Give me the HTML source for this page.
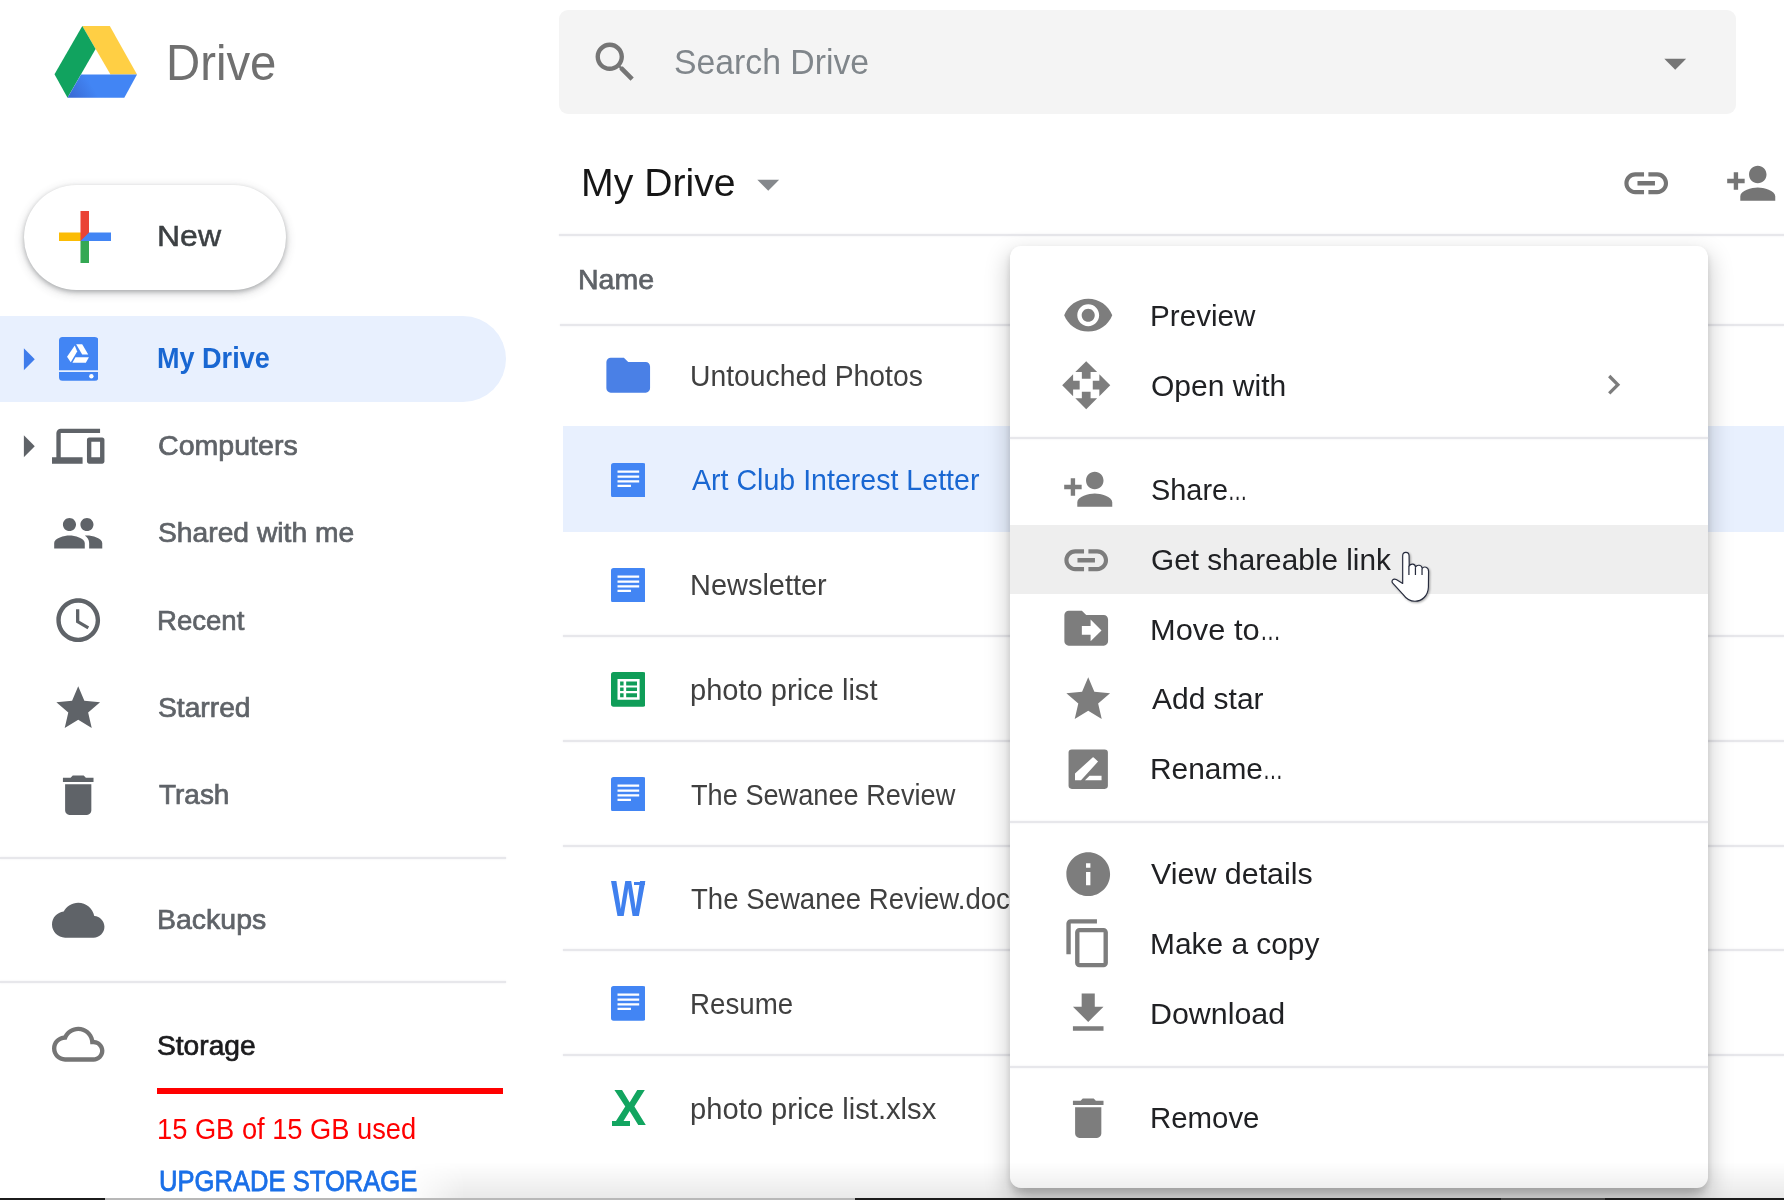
<!DOCTYPE html>
<html lang="en">
<head>
<meta charset="utf-8">
<title>My Drive - Google Drive</title>
<style>
html,body{margin:0;padding:0;background:#fff;}
body{width:1784px;height:1200px;position:relative;overflow:hidden;font-family:"Liberation Sans",sans-serif;}
.a{position:absolute;display:block;}
.t{position:absolute;white-space:nowrap;line-height:1;transform-origin:0 50%;}
.el{display:inline-block;transform:scaleX(.68);transform-origin:0 50%;margin-right:-.32em;}
.hl{position:absolute;background:#e7e7eb;height:2px;box-shadow:0 0 1.5px rgba(226,226,232,.9);}
</style>
</head>
<body>

<!-- ===== sidebar ===== -->
<svg class="a" style="left:50px;top:20px" width="92" height="84" viewBox="50 20 92 84">
  <polygon fill="#FFCF44" points="82.3,26 109.8,26 137,74.5 110.5,74.5"/>
  <polygon fill="#11A35F" points="82.3,26 95.6,49 67.5,97.8 54.5,74.3"/>
  <defs><linearGradient id="bl" gradientUnits="userSpaceOnUse" x1="72" y1="98" x2="92" y2="86"><stop offset="0" stop-color="#3a6cd6"/><stop offset="1" stop-color="#4285F4"/></linearGradient></defs>
  <polygon fill="url(#bl)" points="81,74.5 137,74.5 124.3,97.8 67.5,97.8"/>
</svg>

<div class="a" style="left:24px;top:184.5px;width:262px;height:105px;border-radius:53px;background:#fff;box-shadow:0 2px 4px rgba(60,64,67,.32),0 3px 8px 2px rgba(60,64,67,.16);"></div>
<svg class="a" style="left:55px;top:207px" width="60" height="60" viewBox="55 207 60 60">
  <rect x="59" y="232.5" width="22" height="8.5" fill="#FBBC05"/>
  <rect x="80.5" y="211" width="8.5" height="30" fill="#EA4335"/>
  <rect x="80.5" y="241" width="8.5" height="22" fill="#34A853"/>
  <polygon fill="#4285F4" points="89,232.5 111,232.5 111,241 80.5,241"/>
</svg>

<div class="a" style="left:0;top:315.5px;width:506px;height:86.3px;border-radius:0 44px 44px 0;background:#e8f0fe;"></div>
<svg class="a" style="left:2.18px;top:332.78px" width="52.44" height="52.44" viewBox="0 0 24 24"><path fill="#3f7ceb" d="M10 17l5-5-5-5z"/></svg>
<svg class="a" style="left:2.18px;top:419.78px" width="52.44" height="52.44" viewBox="0 0 24 24"><path fill="#5f6368" d="M10 17l5-5-5-5z"/></svg>

<!-- my drive icon -->
<svg class="a" style="left:59.1px;top:337px" width="39.4" height="43.8" viewBox="0 0 18 20">
  <path fill="#4285f4" d="M1.6 0h14.8A1.6 1.6 0 0 1 18 1.6V15.15H0V1.6A1.6 1.6 0 0 1 1.6 0zM0 16h18v2.4a1.6 1.6 0 0 1-1.6 1.6H1.6A1.6 1.6 0 0 1 0 18.4z"/>
  <circle cx="14.8" cy="17.95" r="1" fill="#fff"/>
  <polygon fill="#fff" points="3.68,9 7.2,3.9 8.3,6.65 5.37,11.56"/>
  <polygon fill="#fff" points="7.83,3.27 10.6,3.27 13.35,8.03 10.6,8.03"/>
  <polygon fill="#fff" points="7.52,9.26 13.66,9.26 12.28,11.72 6.14,11.72"/>
</svg>
<svg class="a" style="left:52.28px;top:420.08px" width="52.44" height="52.44" viewBox="0 0 24 24"><path fill="#5f6368" d="M4 6h18V4H4c-1.1 0-2 .9-2 2v11H0v3h14v-3H4V6zm19 2h-6c-.55 0-1 .45-1 1v10c0 .55.45 1 1 1h6c.55 0 1-.45 1-1V9c0-.55-.45-1-1-1zm-1 9h-4v-7h4v7z"/></svg>
<svg class="a" style="left:52.38px;top:507.08px" width="52.44" height="52.44" viewBox="0 0 24 24"><path fill="#5f6368" d="M16 11c1.66 0 2.99-1.34 2.99-3S17.66 5 16 5c-1.66 0-3 1.34-3 3s1.34 3 3 3zm-8 0c1.66 0 2.99-1.34 2.99-3S9.66 5 8 5C6.34 5 5 6.34 5 8s1.34 3 3 3zm0 2c-2.33 0-7 1.17-7 3.5V19h14v-2.5c0-2.33-4.67-3.5-7-3.5zm8 0c-.29 0-.62.02-.97.05 1.16.84 1.97 1.97 1.97 3.45V19h6v-2.5c0-2.33-4.67-3.5-7-3.5z"/></svg>
<svg class="a" style="left:52.28px;top:594.18px" width="52.44" height="52.44" viewBox="0 0 24 24"><path fill="#5f6368" d="M11.99 2C6.47 2 2 6.48 2 12s4.47 10 9.99 10C17.52 22 22 17.52 22 12S17.52 2 11.99 2zM12 20c-4.42 0-8-3.58-8-8s3.58-8 8-8 8 3.58 8 8-3.58 8-8 8zm.5-13H11v6l5.25 3.15.75-1.23-4.5-2.67z"/></svg>
<svg class="a" style="left:52.28px;top:681.98px" width="52.44" height="52.44" viewBox="0 0 24 24"><path fill="#5f6368" d="M12 17.27L18.18 21l-1.64-7.03L22 9.24l-7.19-.61L12 2 9.19 8.63 2 9.24l5.46 4.73L5.82 21z"/></svg>
<svg class="a" style="left:52.38px;top:768.78px" width="52.44" height="52.44" viewBox="0 0 24 24"><path fill="#5f6368" d="M6 19c0 1.1.9 2 2 2h8c1.1 0 2-.9 2-2V7H6v12zM19 4h-3.5l-1-1h-5l-1 1H5v2h14V4z"/></svg>
<div class="hl" style="left:0;top:856.6px;width:506px;"></div>
<svg class="a" style="left:52.28px;top:893.58px" width="52.44" height="52.44" viewBox="0 0 24 24"><path fill="#5f6368" d="M19.35 10.04C18.67 6.59 15.64 4 12 4 9.11 4 6.6 5.64 5.35 8.04 2.34 8.36 0 10.91 0 14c0 3.31 2.69 6 6 6h13c2.76 0 5-2.24 5-5 0-2.64-2.05-4.78-4.65-4.96z"/></svg>
<div class="hl" style="left:0;top:981px;width:506px;"></div>
<svg class="a" style="left:52.28px;top:1017.68px" width="52.44" height="52.44" viewBox="0 0 24 24"><path fill="#757575" d="M19.35 10.04C18.67 6.59 15.64 4 12 4 9.11 4 6.6 5.64 5.35 8.04 2.34 8.36 0 10.91 0 14c0 3.31 2.69 6 6 6h13c2.76 0 5-2.24 5-5 0-2.64-2.05-4.78-4.65-4.96zM19 18H6c-2.21 0-4-1.79-4-4s1.79-4 4-4h.71C7.37 7.69 9.48 6 12 6c3.04 0 5.5 2.46 5.5 5.5v.5H19c1.66 0 3 1.34 3 3s-1.34 3-3 3z"/></svg>
<div class="a" style="left:157px;top:1087.5px;width:346px;height:6.3px;background:#f00;"></div>

<!-- ===== main ===== -->
<div class="a" style="left:558.5px;top:10px;width:1177.5px;height:104px;border-radius:9px;background:#f4f4f4;"></div>
<svg class="a" style="left:588.68px;top:36.48px" width="52.44" height="52.44" viewBox="0 0 24 24"><path fill="#757575" d="M15.5 14h-.79l-.28-.27C15.41 12.59 16 11.11 16 9.5 16 5.91 13.09 3 9.5 3S3 5.91 3 9.5 5.91 16 9.5 16c1.61 0 3.09-.59 4.23-1.57l.27.28v.79l5 4.99L20.49 19l-4.99-5zm-6 0C7.01 14 5 11.99 5 9.5S7.01 5 9.5 5 14 7.01 14 9.5 11.99 14 9.5 14z"/></svg>
<svg class="a" style="left:1648.78px;top:36.78px" width="52.44" height="52.44" viewBox="0 0 24 24"><path fill="#757575" d="M7 10l5 5 5-5z"/></svg>
<svg class="a" style="left:741.78px;top:157.98px" width="52.44" height="52.44" viewBox="0 0 24 24"><path fill="#85888c" d="M7 10l5 5 5-5z"/></svg>
<svg class="a" style="left:1620.28px;top:156.58px" width="52.44" height="52.44" viewBox="0 0 24 24"><path fill="#757575" d="M3.9 12c0-1.71 1.39-3.1 3.1-3.1h4V7H7c-2.76 0-5 2.24-5 5s2.24 5 5 5h4v-1.9H7c-1.71 0-3.1-1.39-3.1-3.1zM8 13h8v-2H8v2zm9-6h-4v1.9h4c1.71 0 3.1 1.39 3.1 3.1s-1.39 3.1-3.1 3.1h-4V17h4c2.76 0 5-2.24 5-5s-2.24-5-5-5z"/></svg>
<svg class="a" style="left:1725.18px;top:157.08px" width="52.44" height="52.44" viewBox="0 0 24 24"><path fill="#757575" d="M15 12c2.21 0 4-1.79 4-4s-1.79-4-4-4-4 1.79-4 4 1.79 4 4 4zm-9-2V7H4v3H1v2h3v3h2v-3h3v-2H6zm9 4c-2.67 0-8 1.34-8 4v2h16v-2c0-2.66-5.33-4-8-4z"/></svg>
<div class="hl" style="left:558.5px;top:233.8px;width:1226px;"></div>
<div class="hl" style="left:560px;top:324px;width:1224px;"></div>

<div class="a" style="left:563px;top:425.8px;width:1221px;height:106px;background:#e8f0fe;"></div>
<div class="hl" style="left:563px;top:635px;width:1221px;"></div>
<div class="hl" style="left:563px;top:740px;width:1221px;"></div>
<div class="hl" style="left:563px;top:845px;width:1221px;"></div>
<div class="hl" style="left:563px;top:949px;width:1221px;"></div>
<div class="hl" style="left:563px;top:1054px;width:1221px;"></div>

<svg class="a" style="left:601.8px;top:349px" width="52.44" height="52.44" viewBox="0 0 24 24"><path fill="#4a80e6" d="M10 4H4c-1.1 0-1.99.9-1.99 2L2 18c0 1.1.9 2 2 2h16c1.1 0 2-.9 2-2V8c0-1.1-.9-2-2-2h-8l-2-2z"/></svg>

<svg class="a" style="left:610.7px;top:462.7px" width="34.7" height="34.7" viewBox="0 0 16 16"><rect width="16" height="16" rx="1.2" fill="#4285f4"/><path fill="#fff" d="M3 3.5h10v1H3zM3 5.75h10v1H3zM3 8h10v1H3zM3 10.05h6.2v1H3z"/></svg>
<svg class="a" style="left:610.7px;top:567.5px" width="34.7" height="34.7" viewBox="0 0 16 16"><rect width="16" height="16" rx="1.2" fill="#4285f4"/><path fill="#fff" d="M3 3.5h10v1H3zM3 5.75h10v1H3zM3 8h10v1H3zM3 10.05h6.2v1H3z"/></svg>
<svg class="a" style="left:610.7px;top:672px" width="34.7" height="34.7" viewBox="0 0 16 16"><rect width="16" height="16" rx="1.2" fill="#0f9d58"/><path fill="#fff" fill-rule="evenodd" d="M3 3.2h10.2v9.6H3zM4.2 4.4v1.8h1.6V4.4zM7 4.4v1.8h5V4.4zM4.2 7.2v1.6h1.6V7.2zM7 7.2v1.6h5V7.2zM4.2 9.8v1.8h1.6V9.8zM7 9.8v1.8h5V9.8z"/></svg>
<svg class="a" style="left:610.7px;top:776.8px" width="34.7" height="34.7" viewBox="0 0 16 16"><rect width="16" height="16" rx="1.2" fill="#4285f4"/><path fill="#fff" d="M3 3.5h10v1H3zM3 5.75h10v1H3zM3 8h10v1H3zM3 10.05h6.2v1H3z"/></svg>
<svg class="a" style="left:610.7px;top:986.3px" width="34.7" height="34.7" viewBox="0 0 16 16"><rect width="16" height="16" rx="1.2" fill="#4285f4"/><path fill="#fff" d="M3 3.5h10v1H3zM3 5.75h10v1H3zM3 8h10v1H3zM3 10.05h6.2v1H3z"/></svg>

<div class="a" style="left:611px;top:874.2px;font-size:49.5px;line-height:1;font-weight:700;color:#4080ee;transform-origin:0 50%;transform:scaleX(.735);">W</div>
<div class="a" style="left:634px;top:881.6px;width:11.3px;height:3.3px;background:#4080ee;"></div>
<div class="a" style="left:612.6px;top:1083.2px;font-size:50.3px;line-height:1;font-weight:700;color:#12a560;transform-origin:0 50%;transform:scaleX(.99);">X</div>
<div class="a" style="left:612px;top:1121.2px;width:18px;height:4.6px;background:#12a560;"></div>

<div class="t" style="left:165.55px;top:38.65px;font-size:49.15px;color:#707070;transform:scaleX(0.9631);">Drive</div>
<div class="t" style="left:156.50px;top:220.90px;font-size:30.02px;color:#3c4043;-webkit-text-stroke:0.50px #3c4043;transform:scaleX(1.0664);">New</div>
<div class="t" style="left:156.52px;top:342.79px;font-size:29.73px;color:#1967d2;font-weight:700;transform:scaleX(0.9099);">My Drive</div>
<div class="t" style="left:157.90px;top:431.49px;font-size:28.35px;color:#5f6368;-webkit-text-stroke:0.70px #5f6368;transform:scaleX(1.0079);">Computers</div>
<div class="t" style="left:158.06px;top:518.44px;font-size:28.35px;color:#5f6368;-webkit-text-stroke:0.70px #5f6368;transform:scaleX(0.9961);">Shared with me</div>
<div class="t" style="left:157.22px;top:605.89px;font-size:28.35px;color:#5f6368;-webkit-text-stroke:0.70px #5f6368;transform:scaleX(0.9723);">Recent</div>
<div class="t" style="left:158.07px;top:693.09px;font-size:28.35px;color:#5f6368;-webkit-text-stroke:0.70px #5f6368;transform:scaleX(0.9957);">Starred</div>
<div class="t" style="left:158.65px;top:780.29px;font-size:28.35px;color:#5f6368;-webkit-text-stroke:0.70px #5f6368;transform:scaleX(0.9860);">Trash</div>
<div class="t" style="left:157.11px;top:905.09px;font-size:28.35px;color:#5f6368;-webkit-text-stroke:0.70px #5f6368;transform:scaleX(1.0050);">Backups</div>
<div class="t" style="left:157.27px;top:1031.29px;font-size:28.35px;color:#1b1b1d;-webkit-text-stroke:0.70px #1b1b1d;transform:scaleX(0.9933);">Storage</div>
<div class="t" style="left:156.97px;top:1113.79px;font-size:29.73px;color:#f00;transform:scaleX(0.9175);">15 GB of 15 GB used</div>
<div class="t" style="left:158.93px;top:1165.79px;font-size:29.47px;color:#1a6fe8;-webkit-text-stroke:0.80px #1a6fe8;transform:scaleX(0.8684);">UPGRADE STORAGE</div>
<div class="t" style="left:674.00px;top:44.11px;font-size:35.17px;color:#80868b;transform:scaleX(0.9600);">Search Drive</div>
<div class="t" style="left:581.12px;top:162.83px;font-size:39.10px;color:#161616;transform:scaleX(1.0032);">My Drive</div>
<div class="t" style="left:577.56px;top:264.96px;font-size:28.56px;color:#5f6368;-webkit-text-stroke:0.75px #5f6368;transform:scaleX(0.9985);">Name</div>
<div class="t" style="left:690.16px;top:360.79px;font-size:29.73px;color:#404040;transform:scaleX(0.9521);">Untouched Photos</div>
<div class="t" style="left:692.03px;top:464.79px;font-size:29.73px;color:#1967d2;transform:scaleX(0.9614);">Art Club Interest Letter</div>
<div class="t" style="left:689.71px;top:569.79px;font-size:29.73px;color:#404040;transform:scaleX(0.9741);">Newsletter</div>
<div class="t" style="left:689.72px;top:674.79px;font-size:29.73px;color:#404040;transform:scaleX(0.9784);">photo price list</div>
<div class="t" style="left:691.42px;top:779.79px;font-size:29.73px;color:#404040;transform:scaleX(0.9144);">The Sewanee Review</div>
<div class="t" style="left:691.02px;top:883.79px;font-size:29.73px;color:#404040;transform:scaleX(0.9280);">The Sewanee Review.docx</div>
<div class="t" style="left:690.02px;top:988.79px;font-size:29.73px;color:#404040;transform:scaleX(0.9319);">Resume</div>
<div class="t" style="left:689.72px;top:1093.79px;font-size:29.73px;color:#404040;transform:scaleX(0.9808);">photo price list.xlsx</div>

<!-- ===== context menu ===== -->
<div class="a" style="left:1010px;top:245.5px;width:697.5px;height:942.5px;border-radius:11px;background:#fff;box-shadow:0 4px 6px rgba(0,0,0,.12),0 10px 22px 4px rgba(0,0,0,.17),0 18px 14px -8px rgba(0,0,0,.10);"></div>
<div class="a" style="left:1010px;top:525.2px;width:697.5px;height:69px;background:#eee;"></div>
<div class="hl" style="left:1010px;top:437.3px;width:697.5px;"></div>
<div class="hl" style="left:1010px;top:821px;width:697.5px;"></div>
<div class="hl" style="left:1010px;top:1065.8px;width:697.5px;"></div>

<svg class="a" style="left:1061.78px;top:289.08px" width="52.44" height="52.44" viewBox="0 0 24 24"><path fill="#7d7d7d" d="M12 4.5C7 4.5 2.73 7.61 1 12c1.73 4.39 6 7.5 11 7.5s9.27-3.11 11-7.5c-1.73-4.39-6-7.5-11-7.5zM12 17c-2.76 0-5-2.24-5-5s2.24-5 5-5 5 2.24 5 5-2.24 5-5 5zm0-8c-1.66 0-3 1.34-3 3s1.34 3 3 3 3-1.34 3-3-1.34-3-3-3z"/></svg>
<svg class="a" style="left:1060.28px;top:358.88px" width="52.44" height="52.44" viewBox="0 0 24 24"><path fill="#7d7d7d" d="M10 9h4V6h3l-5-5-5 5h3v3zm-1 1H6V7l-5 5 5 5v-3h3v-4zm14 2l-5-5v3h-3v4h3v3l5-5zm-9 3h-4v3H7l5 5 5-5h-3v-3z"/></svg>
<svg class="a" style="left:1593.94px;top:365.44px" width="39.31" height="39.31" viewBox="0 0 24 24"><path fill="#7d7d7d" d="M10 6L8.59 7.41 13.17 12l-4.58 4.59L10 18l6-6z"/></svg>
<svg class="a" style="left:1061.78px;top:463.38px" width="52.44" height="52.44" viewBox="0 0 24 24"><path fill="#7d7d7d" d="M15 12c2.21 0 4-1.79 4-4s-1.79-4-4-4-4 1.79-4 4 1.79 4 4 4zm-9-2V7H4v3H1v2h3v3h2v-3h3v-2H6zm9 4c-2.67 0-8 1.34-8 4v2h16v-2c0-2.66-5.33-4-8-4z"/></svg>
<svg class="a" style="left:1059.98px;top:533.78px" width="52.44" height="52.44" viewBox="0 0 24 24"><path fill="#7d7d7d" d="M3.9 12c0-1.71 1.39-3.1 3.1-3.1h4V7H7c-2.76 0-5 2.24-5 5s2.24 5 5 5h4v-1.9H7c-1.71 0-3.1-1.39-3.1-3.1zM8 13h8v-2H8v2zm9-6h-4v1.9h4c1.71 0 3.1 1.39 3.1 3.1s-1.39 3.1-3.1 3.1h-4V17h4c2.76 0 5-2.24 5-5s-2.24-5-5-5z"/></svg>
<svg class="a" style="left:1059.98px;top:601.88px" width="52.44" height="52.44" viewBox="0 0 24 24"><path fill="#7d7d7d" d="M20 6h-8l-2-2H4c-1.1 0-2 .9-2 2v12c0 1.1.9 2 2 2h16c1.1 0 2-.9 2-2V8c0-1.1-.9-2-2-2zm-6 12v-3h-4v-4h4V8l5 5-5 5z"/></svg>
<svg class="a" style="left:1061.98px;top:673.18px" width="52.44" height="52.44" viewBox="0 0 24 24"><path fill="#7d7d7d" d="M12 17.27L18.18 21l-1.64-7.03L22 9.24l-7.19-.61L12 2 9.19 8.63 2 9.24l5.46 4.73L5.82 21z"/></svg>
<svg class="a" style="left:1062px;top:742.9px" width="52.44" height="52.44" viewBox="0 0 24 24">
  <rect x="3" y="3" width="18" height="18" rx="1.5" fill="#7d7d7d"/>
  <path fill="#fff" d="M5.95 17V14L14 6.6Q14.25 6.4 14.5 6.65L16.5 8.5L8.7 17ZM10.5 17L12.6 15H18.1V17Z"/>
</svg>
<svg class="a" style="left:1062.18px;top:847.98px" width="52.44" height="52.44" viewBox="0 0 24 24"><path fill="#7d7d7d" d="M12 2C6.48 2 2 6.48 2 12s4.48 10 10 10 10-4.48 10-10S17.52 2 12 2zm1 15h-2v-6h2v6zm0-8h-2V7h2v2z"/></svg>
<svg class="a" style="left:1062.18px;top:917.38px" width="52.44" height="52.44" viewBox="0 0 24 24"><path fill="#7d7d7d" d="M16 1H4c-1.1 0-2 .9-2 2v14h2V3h12V1zm3 4H8c-1.1 0-2 .9-2 2v14c0 1.1.9 2 2 2h11c1.1 0 2-.9 2-2V7c0-1.1-.9-2-2-2zm0 16H8V7h11v14z"/></svg>
<svg class="a" style="left:1061.98px;top:987.28px" width="52.44" height="52.44" viewBox="0 0 24 24"><path fill="#7d7d7d" d="M19 9h-4V3H9v6H5l7 7 7-7zM5 18v2h14v-2H5z"/></svg>
<svg class="a" style="left:1061.98px;top:1091.78px" width="52.44" height="52.44" viewBox="0 0 24 24"><path fill="#7d7d7d" d="M6 19c0 1.1.9 2 2 2h8c1.1 0 2-.9 2-2V7H6v12zM19 4h-3.5l-1-1h-5l-1 1H5v2h14V4z"/></svg>

<div class="t" style="left:1149.91px;top:300.79px;font-size:29.73px;color:#202124;transform:scaleX(0.9974);">Preview</div>
<div class="t" style="left:1150.90px;top:370.59px;font-size:29.73px;color:#202124;transform:scaleX(1.0109);">Open with</div>
<div class="t" style="left:1150.84px;top:475.39px;font-size:29.73px;color:#202124;transform:scaleX(0.9721);">Share<span class="el">…</span></div>
<div class="t" style="left:1150.73px;top:544.59px;font-size:29.73px;color:#202124;transform:scaleX(1.0013);">Get shareable link</div>
<div class="t" style="left:1149.67px;top:614.79px;font-size:29.73px;color:#202124;transform:scaleX(1.0366);">Move to<span class="el">…</span></div>
<div class="t" style="left:1151.59px;top:683.99px;font-size:29.73px;color:#202124;transform:scaleX(1.0080);">Add star</div>
<div class="t" style="left:1149.90px;top:754.19px;font-size:29.73px;color:#202124;transform:scaleX(1.0058);">Rename<span class="el">…</span></div>
<div class="t" style="left:1151.37px;top:858.59px;font-size:29.73px;color:#202124;transform:scaleX(1.0235);">View details</div>
<div class="t" style="left:1149.90px;top:928.59px;font-size:29.73px;color:#202124;transform:scaleX(1.0056);">Make a copy</div>
<div class="t" style="left:1149.79px;top:999.39px;font-size:29.73px;color:#202124;transform:scaleX(1.0227);">Download</div>
<div class="t" style="left:1149.97px;top:1103.34px;font-size:29.73px;color:#202124;transform:scaleX(0.9889);">Remove</div>

<!-- cursor -->
<svg class="a" style="left:1370px;top:530px;filter:drop-shadow(1px 1px 0.8px rgba(0,0,0,.35));" width="80" height="90" viewBox="0 0 1067 1200">
  <path d="M436 345 C436 284 521 284 521 345 L523 480 C545 442 600 446 608 494 C628 457 690 462 696 514 C720 477 781 492 781 550 L779 760 C775 880 690 950 600 950 C530 950 480 913 440 858 L306 712 C276 678 312 640 350 661 L436 712 Z" fill="#fff" stroke="#262b3d" stroke-width="15.5" stroke-linejoin="round"/>
  <path d="M519 475V600M606 495V600M694 515V600" stroke="#262b3d" stroke-width="16.5" fill="none"/>
</svg>

<!-- bottom strip -->
<div class="a" style="left:405px;top:1162px;width:1379px;height:36px;background:linear-gradient(to bottom,rgba(0,0,0,0),rgba(0,0,0,.085));-webkit-mask-image:linear-gradient(to right,transparent,#000 60px);mask-image:linear-gradient(to right,transparent,#000 60px);"></div>
<div class="a" style="left:0;top:1197.5px;width:1784px;height:3px;background:#b8b8b8;"></div>
<div class="a" style="left:0;top:1197.5px;width:104.5px;height:3px;background:#1c1c1c;"></div>
<div class="a" style="left:855px;top:1197.5px;width:929px;height:3px;background:#1c1c1c;"></div>
<div class="a" style="left:1500.5px;top:1197.5px;width:104.5px;height:3px;background:#454545;"></div>

</body>
</html>
